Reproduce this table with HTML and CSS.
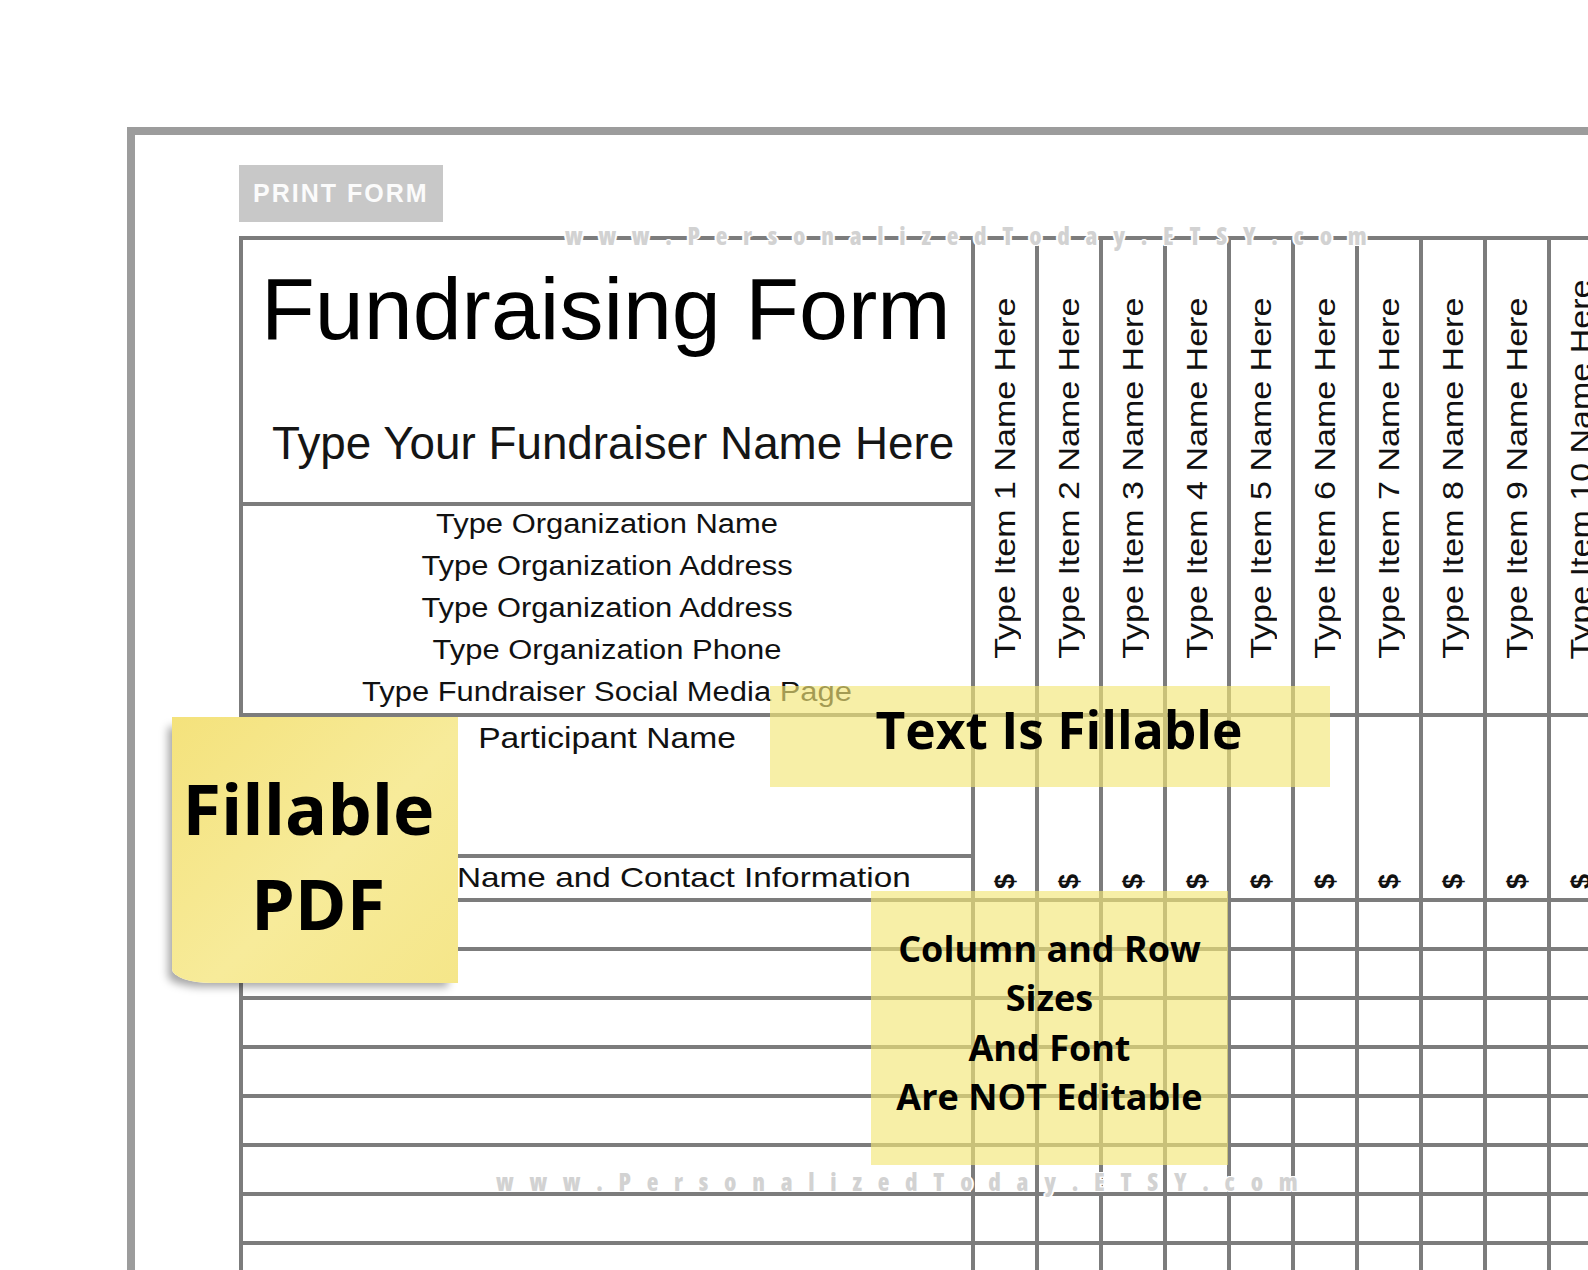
FILE: index.html
```html
<!DOCTYPE html>
<html lang="en">
<head>
<meta charset="utf-8">
<title>Fundraising Form</title>
<link rel="stylesheet" href="styles.css">
</head>
<body>
<div class="frame">
  <div class="print-btn">PRINT FORM</div>
  <div class="sheet">
    <div class="left-head">
      <div class="title-block">
        <div class="title">Fundraising Form</div>
        <div class="subtitle">Type Your Fundraiser Name Here</div>
      </div>
      <div class="org-block">
        <div class="org-lines">
          <div class="org-line">Type Organization Name</div>
          <div class="org-line">Type Organization Address</div>
          <div class="org-line">Type Organization Address</div>
          <div class="org-line">Type Organization Phone</div>
          <div class="org-line">Type Fundraiser Social Media Page</div>
        </div>
      </div>
    </div>
    <div class="item-head"><span class="vtext">Type Item 1 Name Here</span></div>
    <div class="item-head"><span class="vtext">Type Item 2 Name Here</span></div>
    <div class="item-head"><span class="vtext">Type Item 3 Name Here</span></div>
    <div class="item-head"><span class="vtext">Type Item 4 Name Here</span></div>
    <div class="item-head"><span class="vtext">Type Item 5 Name Here</span></div>
    <div class="item-head"><span class="vtext">Type Item 6 Name Here</span></div>
    <div class="item-head"><span class="vtext">Type Item 7 Name Here</span></div>
    <div class="item-head"><span class="vtext">Type Item 8 Name Here</span></div>
    <div class="item-head"><span class="vtext">Type Item 9 Name Here</span></div>
    <div class="item-head"><span class="vtext">Type Item 10 Name Here</span></div>

    <div class="left-sub">
      <div class="participant"><span class="participant-text">Participant Name</span></div>
      <div class="contact"><span class="contact-text">Name and Contact Information</span></div>
    </div>
    <div class="item-sum"><span class="dollar">$</span></div>
    <div class="item-sum"><span class="dollar">$</span></div>
    <div class="item-sum"><span class="dollar">$</span></div>
    <div class="item-sum"><span class="dollar">$</span></div>
    <div class="item-sum"><span class="dollar">$</span></div>
    <div class="item-sum"><span class="dollar">$</span></div>
    <div class="item-sum"><span class="dollar">$</span></div>
    <div class="item-sum"><span class="dollar">$</span></div>
    <div class="item-sum"><span class="dollar">$</span></div>
    <div class="item-sum"><span class="dollar">$</span></div>

    <div class="cell wide"></div><div class="cell"></div><div class="cell"></div><div class="cell"></div><div class="cell"></div><div class="cell"></div><div class="cell"></div><div class="cell"></div><div class="cell"></div><div class="cell"></div><div class="cell"></div>
    <div class="cell wide"></div><div class="cell"></div><div class="cell"></div><div class="cell"></div><div class="cell"></div><div class="cell"></div><div class="cell"></div><div class="cell"></div><div class="cell"></div><div class="cell"></div><div class="cell"></div>
    <div class="cell wide"></div><div class="cell"></div><div class="cell"></div><div class="cell"></div><div class="cell"></div><div class="cell"></div><div class="cell"></div><div class="cell"></div><div class="cell"></div><div class="cell"></div><div class="cell"></div>
    <div class="cell wide"></div><div class="cell"></div><div class="cell"></div><div class="cell"></div><div class="cell"></div><div class="cell"></div><div class="cell"></div><div class="cell"></div><div class="cell"></div><div class="cell"></div><div class="cell"></div>
    <div class="cell wide"></div><div class="cell"></div><div class="cell"></div><div class="cell"></div><div class="cell"></div><div class="cell"></div><div class="cell"></div><div class="cell"></div><div class="cell"></div><div class="cell"></div><div class="cell"></div>
    <div class="cell wide"></div><div class="cell"></div><div class="cell"></div><div class="cell"></div><div class="cell"></div><div class="cell"></div><div class="cell"></div><div class="cell"></div><div class="cell"></div><div class="cell"></div><div class="cell"></div>
    <div class="cell wide"></div><div class="cell"></div><div class="cell"></div><div class="cell"></div><div class="cell"></div><div class="cell"></div><div class="cell"></div><div class="cell"></div><div class="cell"></div><div class="cell"></div><div class="cell"></div>
    <div class="cell wide"></div><div class="cell"></div><div class="cell"></div><div class="cell"></div><div class="cell"></div><div class="cell"></div><div class="cell"></div><div class="cell"></div><div class="cell"></div><div class="cell"></div><div class="cell"></div>
  </div>
</div>

<div class="watermark wm-top">www.PersonalizedToday.ETSY.com</div>
<div class="watermark wm-bottom">www.PersonalizedToday.ETSY.com</div>

<div class="callout callout-fillable">Text Is Fillable</div>
<div class="callout callout-note">
  <div>Column and Row</div>
  <div>Sizes</div>
  <div>And Font</div>
  <div>Are NOT Editable</div>
</div>

<div class="sticky">
  <div class="sticky-line1">Fillable</div>
  <div>PDF</div>
</div>
</body>
</html>
```

FILE: styles.css
```css
html, body {
  margin: 0;
  padding: 0;
  background: #ffffff;
}

body {
  width: 1588px;
  height: 1270px;
  overflow: hidden;
  position: relative;
  font-family: "Liberation Sans", Arial, sans-serif;
  color: #111;
}

.frame {
  box-sizing: border-box;
  margin: 127px 0 0 127px;
  width: 1461px;
  height: 1143px;
  border-top: 8px solid #9c9c9c;
  border-left: 8px solid #9c9c9c;
  padding: 30px 0 0 104px;
}

.print-btn {
  box-sizing: border-box;
  width: 204px;
  height: 57px;
  background: #c8c8c8;
  color: #fbfbfb;
  font-weight: bold;
  font-size: 25px;
  letter-spacing: 2px;
  padding-left: 14px;
  display: flex;
  align-items: center;
}

.sheet {
  margin-top: 14px;
  width: max-content;
  display: grid;
  grid-template-columns: 728px repeat(10, 60px);
  grid-template-rows: 473px 181px repeat(8, 45px);
  gap: 4px;
  padding: 4px 0 0 4px;
  background: #7c7c7c;
}

.cell, .item-head, .item-sum {
  background: #ffffff;
}

/* left header column */
.left-head, .left-sub {
  display: flex;
  flex-direction: column;
  gap: 4px;
  background: #7c7c7c;
}

.title-block {
  height: 263px;
  background: #fff;
  padding: 25px 0 0 18px;
  box-sizing: border-box;
  color: #000;
}

.title {
  font-size: 88px;
  line-height: 88px;
  white-space: nowrap;
}

.subtitle {
  margin-top: 68px;
  padding-left: 11px;
  font-size: 45.8px;
  line-height: 46px;
  white-space: nowrap;
  color: #151515;
}

.org-block {
  flex: 1;
  background: #fff;
}

.org-lines {
  margin-top: -3px;
}

.org-line {
  font-size: 27px;
  line-height: 42px;
  text-align: center;
  transform: scaleX(1.145);
  white-space: nowrap;
}

.participant {
  height: 137px;
  background: #fff;
  padding-top: 6px;
  box-sizing: border-box;
  text-align: center;
}

.participant-text {
  display: inline-block;
  font-size: 30px;
  line-height: 30px;
  transform: scaleX(1.12);
}

.contact {
  flex: 1;
  background: #fff;
  padding-left: 214px;
}

.contact-text {
  display: inline-block;
  font-size: 28px;
  line-height: 40px;
  white-space: nowrap;
  transform: scaleX(1.19);
  transform-origin: left center;
}

/* item columns */
.item-head {
  display: flex;
  justify-content: center;
  align-items: flex-end;
  padding-bottom: 76px;
  box-sizing: border-box;
}

.vtext {
  writing-mode: vertical-rl;
  transform: rotate(180deg) scaleY(1.134);
  font-size: 30px;
  line-height: 30px;
  white-space: nowrap;
  color: #111;
}

.item-sum {
  display: flex;
  justify-content: center;
  align-items: flex-end;
  padding-bottom: 9px;
  box-sizing: border-box;
}

.dollar {
  writing-mode: vertical-rl;
  transform: rotate(180deg);
  font-weight: bold;
  font-size: 27px;
  line-height: 27px;
  color: #111;
}

/* watermark */
.watermark {
  position: absolute;
  font-family: "Open Sans", sans-serif;
  font-weight: 800;
  font-stretch: 80%;
  font-size: 24px;
  line-height: 24px;
  letter-spacing: 15.75px;
  color: #d2d2d2;
  white-space: nowrap;
  text-shadow: 1px 0 0 #fff, -1px 0 0 #fff, 0 1px 0 #fff, 0 -1px 0 #fff,
    1px 1px 0 #fff, -1px -1px 0 #fff, 1px -1px 0 #fff, -1px 1px 0 #fff,
    2px 0 0 #fff, -2px 0 0 #fff;
}

.wm-top {
  left: 565px;
  top: 224px;
}

.wm-bottom {
  left: 496px;
  top: 1170px;
}

/* yellow callouts */
.callout {
  position: absolute;
  box-sizing: border-box;
  background: rgba(242, 230, 120, 0.65);
  font-family: "Open Sans", sans-serif;
  font-weight: 700;
  color: #000;
  text-align: center;
}

.callout-fillable {
  left: 770px;
  top: 686px;
  width: 560px;
  height: 101px;
  font-size: 51.5px;
  line-height: 51px;
  padding: 18px 0 0 18px;
}

.callout-note {
  left: 871px;
  top: 891px;
  width: 357px;
  height: 274px;
  font-size: 36px;
  line-height: 49.3px;
  padding-top: 33px;
}

.sticky {
  position: absolute;
  left: 172px;
  top: 717px;
  width: 286px;
  height: 266px;
  box-sizing: border-box;
  padding: 44px 0 0 6px;
  background: linear-gradient(135deg, #f4e27c 0%, #f7eb9a 55%, #f5e689 100%);
  border-bottom-left-radius: 40px 14px;
  box-shadow: -7px 7px 9px -3px rgba(0, 0, 0, 0.35);
  font-family: "Open Sans", sans-serif;
  font-weight: 700;
  font-size: 70px;
  line-height: 95px;
  color: #000;
  text-align: center;
}

.sticky-line1 {
  margin-right: 19px;
}
```
